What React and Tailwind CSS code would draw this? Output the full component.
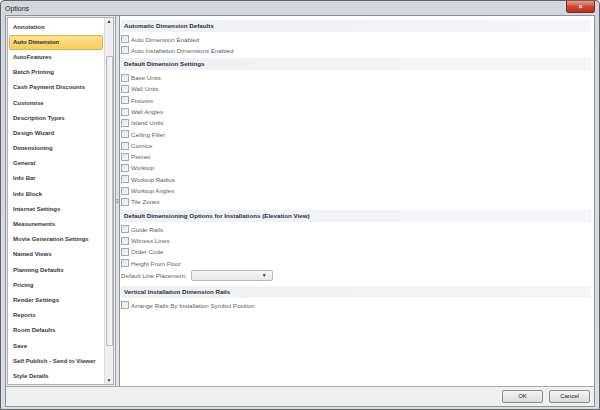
import React from "react";

const categories = [
  "Annotation",
  "Auto Dimension",
  "AutoFeatures",
  "Batch Printing",
  "Cash Payment Discounts",
  "Customise",
  "Description Types",
  "Design Wizard",
  "Dimensioning",
  "General",
  "Info Bar",
  "Info Block",
  "Internet Settings",
  "Measurements",
  "Movie Generation Settings",
  "Named Views",
  "Planning Defaults",
  "Pricing",
  "Render Settings",
  "Reports",
  "Room Defaults",
  "Save",
  "Self Publish - Send to Viewer",
  "Style Details",
];

const Header = ({ children }) => (
  <div className="h-[12px] mt-[2px] mb-[2px] flex items-center pl-[3px] bg-gradient-to-r from-[#eef0f4] to-[#f4f5f8] text-[6.2px] font-bold text-[#2a2f38] whitespace-nowrap">
    {children}
  </div>
);

const Check = ({ children }) => (
  <div className="h-[11.3px] flex items-center gap-[2px] text-[6.2px] text-[#5a5f66] whitespace-nowrap">
    <span className="w-[8px] h-[8px] border border-[#a4a8ae] bg-gradient-to-br from-[#e3e5e8] to-[#f8f8f8] shrink-0" />
    <span>{children}</span>
  </div>
);

export default function App() {
  return (
    <div
      className="w-[600px] h-[410px] flex flex-col bg-gradient-to-b from-[#d3d7dc] to-[#d9dde2] border border-[#5f6368] rounded-t-[4px] overflow-hidden"
      style={{ fontFamily: "'Liberation Sans', Arial, sans-serif" }}
    >
      <div className="h-[15px] flex items-start justify-between">
        <span className="pl-[4px] pt-[3px] text-[7px] text-[#1d1d1d]">Options</span>
        <div className="mr-[4px] w-[29px] h-[12px] rounded-b-[3px] bg-gradient-to-b from-[#e79c8a] via-[#cf4a31] to-[#b8301b] border border-[#7a2a1e] border-t-0 flex items-center justify-center text-white text-[7px] font-bold leading-none">
          ×
        </div>
      </div>

      <div className="flex-1 flex flex-col mx-[4px] mb-[4px] border border-[#8d9299] bg-[#f0f0f0]">
        <div className="flex-1 flex min-h-0">
          <div className="w-[110px] flex border-r border-[#a0a4aa] bg-[#e6e8eb] p-[1px]">
            <div className="flex-1 bg-white border border-[#aeb2b8] flex">
              <div className="flex-1 pt-[2px] px-[1px]">
                {categories.map((c) => (
                  <div
                    key={c}
                    className={
                      c === "Auto Dimension"
                        ? "h-[15.2px] flex items-center pl-[3px] text-[6px] font-bold text-[#1e2a3a] bg-gradient-to-b from-[#fde38f] to-[#f8cc57] border border-[#e0b23f] rounded-[2px] whitespace-nowrap"
                        : "h-[15.2px] flex items-center pl-[4px] text-[6px] font-bold text-[#34383e] whitespace-nowrap"
                    }
                  >
                    {c}
                  </div>
                ))}
              </div>
              <div className="w-[9px] bg-[#eceef0] border-l border-[#d8dbdf] flex flex-col items-center justify-between py-[1px]">
                <span className="text-[5px] leading-none text-[#444]">▲</span>
                <div className="w-[7px] flex-1 my-[2px] bg-gradient-to-r from-[#e9e9e9] to-[#f7f7f7] border border-[#b8bcc1] rounded-[1px] max-h-[290px]" />
                <span className="text-[5px] leading-none text-[#444]">▼</span>
              </div>
            </div>
          </div>

          <div className="w-[4px] bg-[#e0e2e5] flex items-center justify-center border-r border-[#8d9299]">
            <span className="text-[6px] text-[#777] leading-none">≡</span>
          </div>

          <div className="flex-1 bg-white pt-[2px] pr-[3px] pl-[1px]">
            <Header>Automatic Dimension Defaults</Header>
            <Check>Auto Dimension Enabled</Check>
            <Check>Auto Installation Dimensions Enabled</Check>
            <Header>Default Dimension Settings</Header>
            <Check>Base Units</Check>
            <Check>Wall Units</Check>
            <Check>Fixtures</Check>
            <Check>Wall Angles</Check>
            <Check>Island Units</Check>
            <Check>Ceiling Filler</Check>
            <Check>Cornice</Check>
            <Check>Pelmet</Check>
            <Check>Worktop</Check>
            <Check>Worktop Radius</Check>
            <Check>Worktop Angles</Check>
            <Check>Tile Zones</Check>
            <Header>Default Dimensioning Options for Installations (Elevation View)</Header>
            <Check>Guide Rails</Check>
            <Check>Witness Lines</Check>
            <Check>Order Code</Check>
            <Check>Height From Floor</Check>
            <div className="h-[13px] mb-[4px] flex items-center gap-[4px] text-[6.2px] text-[#5a5f66]">
              <span>Default Line Placement:</span>
              <div className="w-[82px] h-[11px] border border-[#b4b8be] rounded-[2px] bg-gradient-to-b from-[#f6f6f6] to-[#e6e7e9] flex items-center justify-end pr-[5px]">
                <span className="text-[5px] text-[#333] leading-none">▼</span>
              </div>
            </div>
            <Header>Vertical Installation Dimension Rails</Header>
            <Check>Arrange Rails By Installation Symbol Position</Check>
          </div>
        </div>

        <div className="h-[20px] border-t border-[#a6aab0] flex items-center justify-end gap-[6px] pr-[4px]">
          <button className="w-[41px] h-[13px] border border-[#8a8e94] rounded-[2px] bg-gradient-to-b from-[#f4f4f4] to-[#dcdcdc] text-[6px] text-[#222]">
            OK
          </button>
          <button className="w-[41px] h-[13px] border border-[#8a8e94] rounded-[2px] bg-gradient-to-b from-[#f4f4f4] to-[#dcdcdc] text-[6px] text-[#222]">
            Cancel
          </button>
        </div>
      </div>
    </div>
  );
}
